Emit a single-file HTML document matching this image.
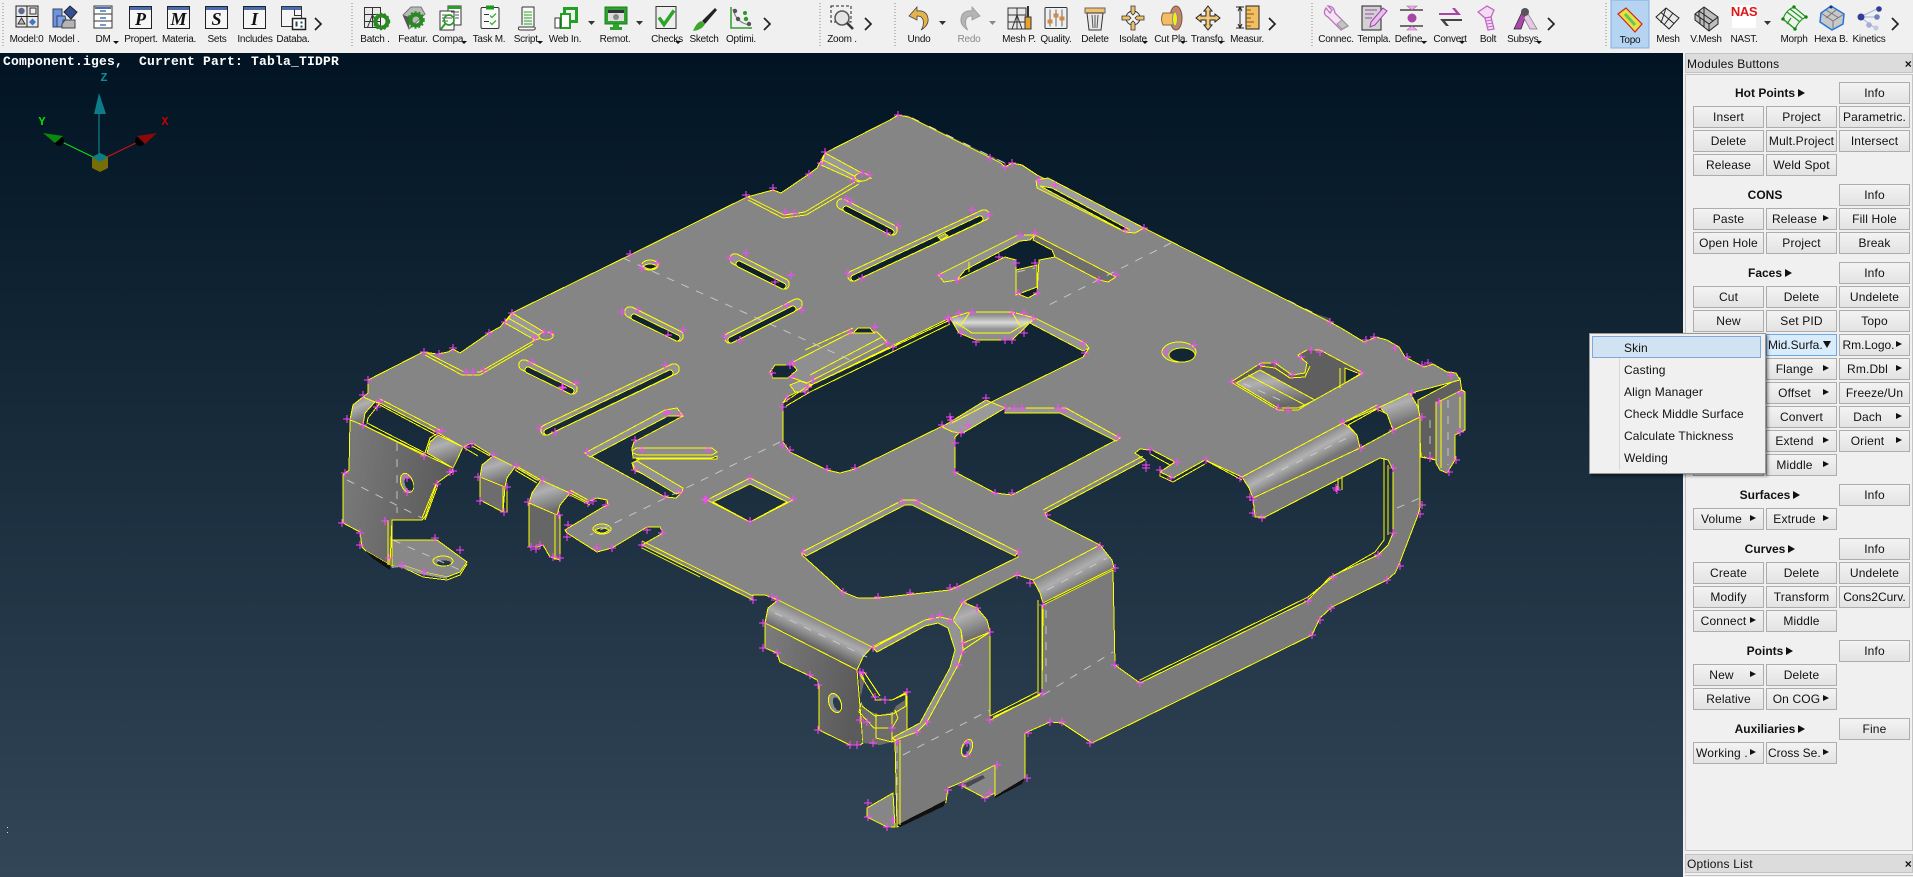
<!DOCTYPE html>
<html><head><meta charset="utf-8"><title>Component.iges</title>
<style>
html,body{margin:0;padding:0;background:#f0f0f0}
body{position:relative;width:1913px;height:877px;overflow:hidden;font-family:"Liberation Sans",sans-serif}
svg{position:absolute;left:0;top:0;display:block}
.y{stroke:#ff0;fill:none;stroke-width:1}
.tl text{font:10px "Liberation Sans",sans-serif;text-anchor:middle;fill:#111;letter-spacing:-.25px}
#vt{position:absolute;left:3px;top:52px;font:bold 13px/20px "Liberation Mono",monospace;letter-spacing:.2px;color:#fff;white-space:pre}
.b{position:absolute;width:71px;height:22px;box-sizing:border-box;border:1px solid #adadad;background:linear-gradient(#f3f3f3,#e3e3e3);font-size:12px;line-height:20px;text-align:center;color:#111;letter-spacing:.15px;white-space:nowrap;overflow:hidden}
.c1{left:1693px}.c2{left:1766px}.c3{left:1839px}
.a{padding-right:14px}
.a i{position:absolute;right:7px;top:6px;width:0;height:0;border-left:6px solid #111;border-top:3.5px solid transparent;border-bottom:3.5px solid transparent}
.l{position:absolute;left:1693px;width:144px;height:22px;line-height:22px;text-align:center;font-size:12px;font-weight:bold;color:#111}
.l span{position:relative}
.l i{position:absolute;right:-10px;top:3px;width:0;height:0;border-left:7px solid #111;border-top:4px solid transparent;border-bottom:4px solid transparent}
.tt{position:absolute;left:1685px;width:228px;box-sizing:border-box;background:#dcdcdc;border:1px solid #c4c4c4;font-size:12px;color:#111;letter-spacing:.2px;padding-left:1px;line-height:20px;height:20px}
.tt b{position:absolute;right:0;top:0;font-weight:bold;font-size:12px}
#pb{position:absolute;left:1685px;top:74px;width:228px;height:777px;box-sizing:border-box;border:1px solid #c4c4c4;background:#f0f0f0}
#mn{position:absolute;left:1589px;top:333px;width:177px;height:141px;box-sizing:border-box;background:#f0f0f0;border:1px solid #979797;box-shadow:2px 2px 3px rgba(0,0,0,.45)}
#mn .s{position:absolute;left:29px;top:3px;bottom:3px;width:1px;background:#d8d8d8}
#mn .h{position:absolute;left:2px;top:2px;width:169px;height:22px;box-sizing:border-box;background:#d1e3f3;border:1px solid #7da9dc}
#mn p{position:absolute;left:34px;margin:0;font-size:12px;line-height:16px;color:#111;white-space:nowrap;letter-spacing:.12px}
</style></head><body>

<svg width="1913" height="877" viewBox="0 0 1913 877">
<defs>
<linearGradient id="bg" gradientUnits="userSpaceOnUse" x1="0" y1="53" x2="0" y2="877"><stop offset="0" stop-color="#011423"/><stop offset="1" stop-color="#324658"/></linearGradient>
<linearGradient id="gFL" gradientUnits="userSpaceOnUse" x1="824" y1="622" x2="813" y2="646"><stop offset="0" stop-color="#858585"/><stop offset=".4" stop-color="#acacac"/><stop offset="1" stop-color="#666"/></linearGradient>
<linearGradient id="gR" gradientUnits="userSpaceOnUse" x1="1290" y1="451" x2="1302" y2="473"><stop offset="0" stop-color="#858585"/><stop offset=".45" stop-color="#b2b2b2"/><stop offset="1" stop-color="#757575"/></linearGradient>
<linearGradient id="gBR" gradientUnits="userSpaceOnUse" x1="1065" y1="563" x2="1078" y2="587"><stop offset="0" stop-color="#858585"/><stop offset=".45" stop-color="#aeaeae"/><stop offset="1" stop-color="#757575"/></linearGradient>
<linearGradient id="gS" x1="0" y1="0" x2=".35" y2="1"><stop offset="0" stop-color="#868686"/><stop offset=".4" stop-color="#b0b0b0"/><stop offset="1" stop-color="#686868"/></linearGradient>
<linearGradient id="gL" x1="0" y1="0" x2="1" y2=".2"><stop offset="0" stop-color="#7c7c7c"/><stop offset="1" stop-color="#5b5b5b"/></linearGradient>
<linearGradient id="gB" x1="0" y1="0" x2="0" y2="1"><stop offset=".1" stop-color="#8e8e8e"/><stop offset=".38" stop-color="#d8d8d8"/><stop offset=".6" stop-color="#959595"/><stop offset="1" stop-color="#8a8a8a"/></linearGradient>
<marker id="x" markerUnits="userSpaceOnUse" markerWidth="9" markerHeight="9" refX="4.5" refY="4.5" overflow="visible"><path d="M.5 4.5h8M4.5 .5v8" stroke="#ff45ff" stroke-width="1" fill="none" shape-rendering="crispEdges"/></marker>
</defs>
<rect x="0" y="53" width="1683" height="824" fill="url(#bg)"/>

<!-- edge fade and dashes behind the plate -->
<path d="M905 116L1000 162M1030 176L1145 230M1270 300L1330 320" stroke="#777" stroke-width="3" opacity=".55" fill="none"/>
<path d="M912 118L1320 316" stroke="#dcdcdc" stroke-dasharray="8 11" fill="none"/>

<g shape-rendering="crispEdges">
<!-- right back wall and flange -->
<path d="M1418 400L1460 378 1462 392 1436 403 1436 460 1421 457Z" fill="#5f5f5f" class="y" style="fill:#5f5f5f"/>
<path d="M1436 403L1462 390 1465 392 1465 430 1455 435 1455 460 1447 473 1440 470 1436 463Z" style="fill:#858585" class="y"/>
<path d="M1441 400V468M1460 392V430" class="y"/>
<path d="M1424 457l8 2" class="y"/>
<!-- front wall -->
<path d="M990 720L1042 693 1043 605 1113 570 1115 665 1140 683 1307 601 1330 577 1378 555 1388 545 1393 533 1393 470 1388 460 1380 458 1265 517 1255 517 1253 498 1420 417 1420 507 1418 515 1398 567 1395 573 1387 580 1332 607 1320 618 1312 635 1092 743 1062 723 1050 722 1025 733 1025 778 1020 783 995 796 995 765 962 782 948 788 946 802 897 827 895 740 917 732 927 722 958 665 963 650 963 643 990 632Z" fill="#7a7a7a" stroke="#ff0"/>
<path d="M995 796L1025 778 1022 784 995 798ZM897 825L946 800 944 806 900 827Z" fill="#111"/>
<path d="M1042 693V605M1038 695V600M990 632V720M1388 535V465M1384 458V540L1375 552 1335 575 1308 597 1140 680" class="y"/>
<path d="M1040 695L993 717M1037 692L990 716" class="y"/>
<path d="M900 740V825" class="y"/>
<!-- lower tabs -->
<path d="M867 808L893 793 895 827 887 827 867 817Z" fill="#868686" stroke="#ff0"/>
<path d="M962 782L995 765 995 793 985 798 962 786Z" fill="#868686" stroke="#ff0"/>
<path d="M963 784L983 775 985 778 968 787Z" fill="#223" opacity=".6"/>
<!-- left front wall -->
<path d="M765 623L765 648 777 653 780 662 808 675 817 680 819 685 819 730 850 745 860 745 863 743 857 670Z" fill="url(#gL)" stroke="#ff0"/>
<path d="M859 670L863 743 880 745 892 742 907 735 907 692 891 700 875 697 860 672Z" fill="#6c6c6c"/>
<path d="M860 672L876 700V738L892 742V700M892 700L907 692V735L892 742M859 712L874 728 892 728 898 718 895 710M859 712L862 700" class="y"/>
<path d="M860 675L876 698M864 672L880 696" stroke="#ff0" fill="none"/>
<path d="M865 678L880 700 890 700 905 694 905 700 896 706 893 712 880 715 866 710 860 700Z" fill="url(#bg)"/>
<path d="M861 676L876 700 892 700 906 694 906 706 893 714 875 716 862 706" class="y"/>
<!-- left wall, far left -->
<path d="M350 420L349 470 343 475 343 523 360 532 362 547 366 551 390 565 392 520 422 520 425 517 437 483 452 472 453 468 363 425Z" fill="url(#gL)" stroke="#ff0"/>
<path d="M366 551L390 565 390 570 372 558Z" fill="#111"/>
<path d="M425 520L438 485M422 518L436 484" class="y"/>
<!-- tab on the lower left -->
<path d="M392 540L437 540 467 562 460 572 447 577 423 572 402 565 392 567Z" fill="#888" stroke="#ff0"/>
<path d="M388 520V565M392 520V567M391 566L402 567 423 577 447 580 460 575 467 564" class="y"/>
<path d="M391 566L392 568 400 567 420 574 447 579 447 577 423 572 402 565Z" fill="#999"/>
<ellipse cx="443" cy="561" rx="10" ry="5" fill="#888" stroke="#ff0"/>
<ellipse cx="444" cy="563" rx="7" ry="2.5" fill="url(#bg)"/>
<!-- flanges -->
<path d="M480 477L480 500 503 512 505 487Z" fill="#6d6d6d" stroke="#ff0"/>
<path d="M503 487V512M507 487V512" class="y"/>
<path d="M529 503L529 547 538 547 543 545 550 557 560 560 560 515 557 515Z" fill="#666" stroke="#ff0"/>
<path d="M555 515V560" class="y"/>

<!-- plate -->
<path d="M368 380L423 352 437 354 448 352 453 349 460 353 489 333 500 327 512 313 630 255 747 197 773 190 781 193 809 174 817 168 825 153 890 120 898 115 909 117 991 158 1001 163 1005 167 1012 163 1022 165 1037 175 1144 228 1330 322 1341 328 1364 342 1376 337 1387 340 1399 347 1405 357 1424 367 1433 364 1447 372 1456 373 1460 380 1415 392 1380 407 1343 423 1242 477 1205 460 1173 478 1160 472 1175 462 1152 450 1140 449 1135 453 1145 460 1045 513 1047 518 1100 545 1033 580 1017 575 963 602 977 608 953 620 940 617 925 620 872 647 778 600 765 595 753 595 753 600 642 545 663 533 660 527 647 527 612 548 597 552 567 533 565 530 603 507 608 505 607 500 597 498 587 502 570 493 541 480 537 480 515 467 493 456 472 443 463 447 438 433 380 403 375 402 363 397 368 393Z" fill="#858585" stroke="#ff0"/>

<!-- bends -->
<path d="M778 600L872 647 863 657 857 670 765 623 768 608Z" fill="url(#gFL)" stroke="#ff0"/>
<path d="M1242 477L1343 423 1350 428 1357 435 1360 448 1253 498 1249 488Z" fill="url(#gR)" stroke="#ff0"/>
<path d="M1033 580L1100 545 1112 560 1114 568 1043 603 1040 593Z" fill="url(#gBR)" stroke="#ff0"/>
<path d="M963 602L977 608 987 620 990 632 963 643 961 630 953 620Z" fill="url(#gS)" stroke="#ff0"/>
<path d="M1380 407L1410 393 1418 407 1420 417 1393 430 1388 417Z" fill="url(#gS)" stroke="#ff0"/>
<path d="M1348 425L1377 409 1387 414 1393 430 1360 448 1357 435Z" fill="url(#bg)" stroke="#ff0"/>
<path d="M1343 423L1377 405M1393 430L1360 448" class="y"/>
<path d="M350 420L353 405 363 397 375 402 365 413 363 425Z" fill="url(#gS)" stroke="#ff0"/>
<path d="M368 418L380 403 438 433 430 438 425 453 367 423Z" fill="url(#bg)" stroke="#ff0"/>
<path d="M363 425L425 456M380 399L440 430M378 404L436 435" class="y"/>
<path d="M427 453L430 442 438 435 463 447 458 458 453 468Z" fill="url(#gS)" stroke="#ff0"/>
<path d="M480 477L482 465 493 456 515 467 507 478 505 487Z" fill="url(#gS)" stroke="#ff0"/>
<path d="M529 503L532 493 541 480 570 493 560 505 557 515Z" fill="url(#gS)" stroke="#ff0"/>
<path d="M463 447L478 456 M472 446L490 456M515 470L537 483M518 467L541 480M570 495L590 505M570 490L588 500" class="y"/>

<!-- tabs on the top edges -->
<path d="M512 313L544 332 553 335 535 340 505 323Z" fill="#9a9a9a" stroke="#ff0"/>
<path d="M508 318L540 336M535 340L480 372 464 372 425 352M533 344L480 375 462 375 425 355" class="y"/>
<path d="M825 153L871 178 859 182 821 165Z" fill="#9a9a9a" stroke="#ff0"/>
<path d="M823 160L862 180M855 182L805 212 784 215 748 197M859 184L806 215 783 218 748 200" class="y"/>
<ellipse cx="862" cy="177" rx="7" ry="4" fill="#858585" stroke="#ff0"/>
<ellipse cx="546" cy="336" rx="7" ry="4" fill="#858585" stroke="#ff0"/>

<!-- capsule slots: outer -->
<g fill="none" stroke-linecap="round">
<path d="M730 338L797 304M546 430L674 369M853 276L984 215M524 365L572 389M630 312L678 336M735 259L784 284M842 204L892 230" stroke="#ff0" stroke-width="11.5"/>
<path d="M730 338L797 304M546 430L674 369M853 276L984 215M524 365L572 389M630 312L678 336M735 259L784 284M842 204L892 230" stroke="#939393" stroke-width="9.5"/>
<g transform="translate(1 2)">
<path d="M730 338L792 307M546 430L669 371M853 276L979 217" stroke="#ff0" stroke-width="7"/>
<path d="M730 338L792 307M546 430L669 371M853 276L979 217" stroke="url(#bg)" stroke-width="5"/>
</g>
<g transform="translate(-1 2)">
<path d="M529 368L572 389M635 315L678 336M740 262L784 284M847 207L892 230" stroke="#ff0" stroke-width="7"/>
<path d="M529 368L572 389M635 315L678 336M740 262L784 284M847 207L892 230" stroke="url(#bg)" stroke-width="5"/>
</g>
</g>
<path d="M938 237L945 233.500 948 236 941 240Z" fill="#999" stroke="#ff0"/>
<ellipse cx="650" cy="265" rx="8" ry="5" fill="#949494" stroke="#ff0"/>
<path d="M643 266Q650 262 657 266Q651 272 643 266Z" fill="url(#bg)" stroke="#ff0"/>
<ellipse cx="602" cy="529" rx="9" ry="5" fill="#949494" stroke="#ff0"/>
<path d="M595 530Q602 526 609 530Q602 536 595 530Z" fill="url(#bg)" stroke="#ff0"/>

<!-- Y shaped hole -->
<path d="M585 453L665 410 677 408 683 416 634 442 632 448 633 458 712 458 717 456 717 459 640 459 632 463 634 470 682 492 676 498 665 497Z" fill="url(#bg)" stroke="#ff0"/>
<path d="M585 453L665 410 677 408 683 416 668 416 590 457Z" fill="#939393" stroke="#ff0"/>
<path d="M632 451L636 448 712 448 717 452 712 455 638 455 633 453Z" fill="#8d8d8d" stroke="#ff0"/>
<path d="M636 459H714" stroke="#ff0"/>
<path d="M632 463L637 461 683 488 682 492 676 494 636 470Z" fill="#939393" stroke="#ff0"/>

<!-- diamond -->
<path d="M707 500L750 478 793 500 750 522Z" fill="#939393" stroke="#ff0"/>
<path d="M713 502L750 484 787 502 750 522Z" fill="url(#bg)" stroke="#ff0"/>

<!-- hole 1 -->
<path d="M783 403L787 397 805 388 950 318 959 333 976 340 1012 340 1035 318 1085 343 1089 348 1083 357 855 469 840 473 827 470 790 452 783 442Z" fill="url(#bg)" stroke="#ff0"/>
<path d="M1035 318L1085 343 1089 348 1083 351 1030 323Z" fill="#949494" stroke="#ff0"/>
<path d="M950 318L970 312 1012 312 1035 318 1012 340 976 340 959 333Z" fill="url(#gB)" stroke="#ff0"/>
<path d="M955 322L972 333H1010L1028 322M970 312L961 325M1012 312L1020 326" class="y"/>
<path d="M793 362L850 333 877 332 887 342 807 383 790 377Z" fill="#8f8f8f" stroke="#ff0"/>
<path d="M805 350L853 328M810 375L882 337" class="y"/>
<path d="M853 333L858 328 870 328 874 333Z" fill="url(#bg)" stroke="#ff0"/>
<path d="M770 372L775 365 793 365 797 370 788 378 773 378Z" fill="url(#bg)" stroke="#ff0"/>
<path d="M790 385L800 381 812 385 804 392 795 392Z" fill="#9a9a9a" stroke="#ff0"/>
<path d="M783 403L805 388 950 320M786 406L810 392 950 324" class="y"/>

<!-- hole 2 -->
<path d="M955 437L955 472 995 493 1012 495 1120 438 1066 408 1005 408 960 432Z" fill="url(#bg)" stroke="#ff0"/>
<path d="M942 427L986 400 1005 408 963 433 953 432Z" fill="#9a9a9a" stroke="#ff0"/>
<path d="M950 424L992 402" class="y"/>
<path d="M1005 408L1066 408 1120 438 1116 441 1060 413 1005 413Z" fill="#949494" stroke="#ff0"/>

<!-- hole 3 -->
<path d="M802 552L903 500 915 500 1018 552 1018 557 957 587 950 590 878 598 858 598 843 592 802 555Z" fill="url(#bg)" stroke="#ff0"/>
<path d="M802 552L903 500 915 500 1018 552 1015 556 912 505 905 505 806 556Z" fill="#929292" stroke="#ff0"/>

<!-- triangle like hole above -->
<path d="M963 650L990 632M873 648L925 620 940 617 953 620 961 630 963 650 958 665 927 722 917 732 895 740 892 738 920 723 950 668 955 650 948 628 938 623 925 626 877 652Z" fill="#939393" stroke="#ff0"/>

<!-- complex cut top centre -->
<path d="M938 275L1018 235 1035 235 1116 277 1108 282 1099 280 1055 257 1039 260 1037 293 1028 298 1016 293 1016 260 1005 257 957 280 944 282Z" fill="url(#bg)" stroke="#ff0"/>
<path d="M938 275L1018 235 1035 235 1030 240 1020 241 965 270 957 280 944 282Z" fill="#929292" stroke="#ff0"/>
<path d="M1035 235L1116 277 1108 282 1099 280 1055 257 1052 250 1033 240Z" fill="#6e6e6e" stroke="#ff0"/>
<path d="M1016 270L1037 265 1037 287 1016 295Z" fill="#777" stroke="#ff0"/>
<path d="M969 272V262" class="y"/>

<!-- long slot by the right edge -->
<path d="M1036 180L1048 178 1144 228 1135 233 1125 232 1037 188Z" fill="#9d9d9d" stroke="#ff0"/>
<path d="M1040 186L1052 188 1130 230 1122 230Z" fill="url(#bg)" stroke="#ff0"/>

<!-- round hole -->
<ellipse cx="1179" cy="352" rx="17" ry="10" fill="#949494" stroke="#ff0"/>
<ellipse cx="1182" cy="355" rx="13" ry="7" fill="url(#bg)" stroke="#ff0"/>

<!-- right cut -->
<path d="M1231 382L1261 363 1275 363 1292 375 1305 373 1307 363 1298 355 1307 350 1320 350 1363 373 1311 402 1298 410 1278 410Z" fill="#5f5f5f" stroke="#ff0"/>
<path d="M1236 383L1260 370 1315 400 1298 408 1278 408Z" fill="url(#gS)" stroke="#ff0"/>
<path d="M1260 366L1275 368 1290 378 1305 377 1310 366 M1248 375L1305 405" class="y"/>
<path d="M1345 368L1360 374 1345 383Z" fill="url(#bg)" stroke="#ff0"/>
<path d="M1340 368V388" class="y"/>
<!-- strip at the notch -->
<path d="M1145 460L1045 513M1143 456L1043 510M1152 450L1175 462M1150 454L1170 465M1205 464L1173 482 1160 476V472M1205 460L1242 480" class="y"/>
<path d="M1140 453L1150 453 1152 458 1146 460Z" fill="url(#bg)"/>
<path d="M753 596L642 541M700 577L642 548" class="y"/>
<!-- wall holes -->
<ellipse cx="407" cy="483" rx="6" ry="10" transform="rotate(-20 407 483)" fill="#8f8f8f" stroke="#ff0"/>
<ellipse cx="409" cy="484" rx="4" ry="7" transform="rotate(-20 409 484)" fill="url(#bg)"/>
<ellipse cx="835" cy="703" rx="6" ry="10" transform="rotate(-20 835 703)" fill="#8f8f8f" stroke="#ff0"/>
<ellipse cx="837" cy="704" rx="3.5" ry="7" transform="rotate(-20 837 704)" fill="url(#bg)"/>
<ellipse cx="967" cy="748" rx="5" ry="9" transform="rotate(20 967 748)" fill="#8f8f8f" stroke="#ff0"/>
<ellipse cx="966" cy="749" rx="3" ry="6" transform="rotate(20 966 749)" fill="url(#bg)"/>
<!-- behind tab at right -->
<path d="M1338 478V490M1342 476V490" class="y"/>
</g>

<!-- plate dashes -->
<g stroke="#d0d0d0" fill="none" stroke-dasharray="8 8" opacity=".85">
<path d="M623 258L850 360M1171 243L1043 308M780 442L590 535M903 755L990 710M1043 695L1113 652M1397 508L1420 498M347 480L422 518M397 443V513M393 540L460 570"/>
<path d="M775 613L867 657M1047 590L1107 558M1267 477L1347 438M1280 400L1240 382M1046 610V690M897 745V820M1448 400V465M1430 420V460M1017 272L1035 268"/>
</g>

<!-- vertex crosses -->
<path fill="none" stroke="none" marker-start="url(#x)" marker-mid="url(#x)" marker-end="url(#x)" d="M368 380L363 395 380 401 377 407 347 419 363 425 442 431 437 432 424 456 466 447 472 444 453 471 450 472 437 484 493 455 516 466 543 480 478 477 507 487 504 512 480 501 528 502 570 493 559 515 531 547 536 549 540 545 553 557 560 558 588 503 593 501 606 505 568 525 567 537 597 548 612 548 642 545 647 530 662 533 407 478 407 492 345 473 342 523 360 533 360 545 385 521 389 558 402 565 424 572 435 538 460 550 540 428 555 432 563 388 576 383 587 452 667 412 635 440 642 450 708 450 635 470 680 492 665 496 706 499 750 478 705 500 793 499 750 521 803 552 902 502 917 502 665 365 667 413 680 415 725 336 740 340 787 305 802 310 622 312 638 310 668 335 683 330 772 373 790 365 793 363 792 377 805 392 808 387 813 380 787 398 783 407 783 445 790 450 827 469 855 468 850 332 875 327 887 343 893 347 948 318 942 425 950 417 512 313 505 322 489 333 453 348 424 352 439 354 466 372 473 372 484 370 535 338 544 332 551 333 532 362 576 383 562 387 630 254 657 263 642 268 746 195 773 188 785 212 794 213 809 174 825 152 821 163 853 180 862 173 869 175 730 258 746 253 791 275 775 282 846 199 851 202 887 233 898 226 848 273 862 278 898 115 990 158 1005 167 1012 163 1039 180 1055 185 1144 228 1125 230 972 210 989 215 940 275 957 280 999 257 1016 263 1035 263 1020 235 1035 233 1116 275 1099 280 1018 293 1037 293 949 320 959 313 972 312 1012 313 1024 313 1033 318 976 342 1005 340 1012 340 1024 333 961 333 1083 343 1085 353 1194 345 1166 352 1330 322 1366 340 1374 337 1395 348 1407 357 1422 365 1428 363 1451 375 1460 393 1439 402 1460 432 1456 460 1449 472 1430 458 1232 382 1261 365 1275 363 1292 375 1301 357 1311 350 1320 352 1361 373 1288 410 1278 408 1412 393 1378 408 1343 422 1393 430 1361 448 1240 478 1250 497 1206 460 1171 478 1160 470 1177 462 1150 450 1146 465 1146 468 1336 488 986 398 1005 408 1014 408 1022 408 1058 408 1064 410 1118 437 955 443 955 472 995 493 1012 493 951 420 942 425 961 433 968 425 1047 515 1100 546 1115 568 1043 605 1030 583 1017 575 963 602 977 608 990 632 963 643 962 652 958 665 927 722 917 732 940 615 932 618 950 620 873 648 860 672 863 673 763 623 763 648 777 653 810 675 818 685 818 730 850 745 857 745 753 600 772 597 777 600 875 697 885 700 907 692 860 720 867 722 873 743 892 728 897 742 1042 693 990 720 1115 665 1140 683 1050 722 1062 722 1090 743 1028 733 1027 778 997 765 962 785 985 798 990 793 948 790 893 820 887 827 868 803 868 817 967 743 967 755 1422 417 1422 505 1420 514 1400 566 1387 580 1331 608 1320 620 1312 635 1393 468 1393 533 1378 555 1333 577 1308 601 1140 683 1262 518 1253 513 1253 500 1337 490 843 592 878 597 910 593 950 588 957 587 1018 552"/>

<!-- axis triad -->
<g>
<path d="M99 156V112" stroke="#0e7f8a" stroke-width="1.2"/>
<path d="M99 93L94 114H106Z" fill="#0e7c88"/>
<path d="M93 157L58 140" stroke="#10e010" stroke-width="1"/>
<path d="M107 157L140 141" stroke="#e01010" stroke-width="1"/>
<circle cx="59" cy="141" r="5" fill="#000"/><circle cx="140" cy="141" r="5" fill="#000"/>
<path d="M43 133L63 136 55 143Z" fill="#0a8a0a"/>
<path d="M157 133L137 136 145 144Z" fill="#8a0a0a"/>
<path d="M92 157L100 153 108 157 108 168 100 172 92 168Z" fill="#776c05"/>
<path d="M92 157L100 153 108 157 100 162Z" fill="#0e7c88"/>
<text x="104" y="81" font-family="Liberation Mono" font-size="12" font-weight="bold" text-anchor="middle" fill="#0e8a98">Z</text>
<text x="42" y="125" font-family="Liberation Mono" font-size="12" font-weight="bold" text-anchor="middle" fill="#00e000">Y</text>
<text x="165" y="125" font-family="Liberation Mono" font-size="12" font-weight="bold" text-anchor="middle" fill="#c80000">X</text>
</g>
<path d="M7 827h1v1h-1zM7 832h1v1h-1z" fill="#ddd"/>

<!-- TOOLBAR -->
<rect x="0" y="0" width="1913" height="53" fill="#f0f0f0"/>
<path d="M3 3V46M352 3V46M820 3V46M895 3V46M1312 3V46M1606 3V46" stroke="#8a8a8a" stroke-dasharray="1 2" fill="none"/>
<rect x="1611" y="0" width="38" height="48" fill="#b5d4f1" stroke="#80b0e0"/>

<g class="tl">
<text x="26.5" y="42">Model:0</text><text x="64" y="42">Model .</text><text x="103" y="42">DM</text><text x="141" y="42">Propert.</text><text x="179" y="42">Materia.</text><text x="217" y="42">Sets</text><text x="255" y="42">Includes</text><text x="293" y="42">Databa.</text>
<text x="375" y="42">Batch .</text><text x="413" y="42">Featur.</text><text x="449" y="42">Compa.</text><text x="489" y="42">Task M.</text><text x="527" y="42">Script.</text><text x="565" y="42">Web In.</text><text x="615" y="42">Remot.</text>
<text x="667" y="42">Checks</text><text x="704" y="42">Sketch</text><text x="741" y="42">Optimi.</text><text x="842" y="42">Zoom .</text><text x="919" y="42">Undo</text><text x="969" y="42" style="fill:#8a8a8a">Redo</text>
<text x="1019" y="42">Mesh P.</text><text x="1056" y="42">Quality.</text><text x="1095" y="42">Delete</text><text x="1133" y="42">Isolate</text><text x="1171" y="42">Cut Pla.</text><text x="1208" y="42">Transfo.</text><text x="1247" y="42">Measur.</text>
<text x="1336" y="42">Connec.</text><text x="1374" y="42">Templa.</text><text x="1411" y="42">Define .</text><text x="1450" y="42">Convert</text><text x="1488" y="42">Bolt</text><text x="1524" y="42">Subsys.</text>
<text x="1630" y="43">Topo</text><text x="1668" y="42">Mesh</text><text x="1706" y="42">V.Mesh</text><text x="1744" y="42">NAST.</text><text x="1794" y="42">Morph</text><text x="1831" y="42">Hexa B.</text><text x="1869" y="42">Kinetics</text>
</g>
<!-- chevrons -->
<path d="M315 18l6 6-6 6M764 18l6 6-6 6M865 18l6 6-6 6M1269 18l6 6-6 6M1548 18l6 6-6 6M1892 18l6 6-6 6" fill="none" stroke="#222" stroke-width="1.7"/>
<!-- dropdown marks -->
<path d="M113 41h6l-3 3zM461 41h6l-3 3zM537 41h6l-3 3zM675 41h6l-3 3zM1142 41h6l-3 3zM1180 41h6l-3 3zM1218 41h6l-3 3zM1421 41h6l-3 3zM1459 41h6l-3 3zM1536 41h6l-3 3z" fill="#111"/>
<path d="M588 21h7l-3.500 4zM636 21h7l-3.500 4zM939 21h7l-3.500 4zM1764 21h7l-3.500 4z" fill="#333"/>
<path d="M989 21h7l-3.500 4z" fill="#888"/>

<!-- Model:0 -->
<g transform="translate(16 6)"><rect width="22" height="21" fill="#e9e9e9" stroke="#222"/><path d="M11 0V21M0 10.500H22" stroke="#222"/><circle cx="5.500" cy="5" r="3.200" fill="#5c6b8c"/><rect x="14" y="2" width="6" height="6" fill="#eee" stroke="#333"/><path d="M2 18l3.500-6 3.500 6z" fill="#bbb" stroke="#333"/><path d="M16.500 12.500l3.500 3.500-3.500 3.500-3.500-3.500z" fill="#3f78c8"/></g>
<!-- Model . -->
<g transform="translate(53 6)"><path d="M0 3H9V10H4V21H0Z" fill="#6f93e0" stroke="#345"/><path d="M4 10H12L13 14H10V21H4Z" fill="#7fa0ea" stroke="#345"/><path d="M11 6L17 0 24 6 18 13Z" fill="#34508e" stroke="#223"/><path d="M12 14H22V22H9V18Z" fill="#b4b4b4" stroke="#444"/></g>
<!-- DM -->
<g transform="translate(94 6)"><rect width="18" height="22" fill="#fff" stroke="#333"/><rect x="1" y="1" width="16" height="2" fill="#4a6cb0"/><path d="M0 8H18M0 15H18" stroke="#333"/><path d="M6 5h6M6 12h6M6 19h6" stroke="#3f78c8" stroke-width="1.500"/></g>
<!-- P M S I -->
<g font-family="Liberation Serif" font-weight="bold" font-style="italic" font-size="18" text-anchor="middle" fill="#111">
<rect x="129.500" y="6.500" width="22" height="22" fill="#f6f6f6" stroke="#222"/><rect x="130" y="7" width="21" height="3" fill="#4a6cb0"/><text x="140.500" y="25">P</text>
<rect x="167.500" y="6.500" width="22" height="22" fill="#f6f6f6" stroke="#222"/><rect x="168" y="7" width="21" height="3" fill="#4a6cb0"/><text x="178.500" y="25">M</text>
<rect x="205.500" y="6.500" width="22" height="22" fill="#f6f6f6" stroke="#222"/><rect x="206" y="7" width="21" height="3" fill="#4a6cb0"/><text x="216.500" y="25">S</text>
<rect x="243.500" y="6.500" width="22" height="22" fill="#f6f6f6" stroke="#222"/><rect x="244" y="7" width="21" height="3" fill="#4a6cb0"/><text x="254.500" y="25">I</text>
</g>
<!-- Databa -->
<g transform="translate(281.500 6.500)"><rect width="20" height="20" fill="#f6f6f6" stroke="#333"/><rect x=".5" y=".5" width="19" height="3" fill="#4a6cb0"/><path d="M13 3V9H20" stroke="#333" fill="none"/><rect x="11" y="12" width="13" height="11" fill="#fff" stroke="#222" stroke-width="1.500"/><path d="M14 15h2v5h-2zM19 15h2v2h-2zM19 19h2v2h-2z" fill="#245"/></g>
<!-- Batch -->
<g transform="translate(364.500 7.500)"><rect width="16" height="20" fill="#e8e8e8" stroke="#333"/><path d="M0 7H16M0 14H16M8 0V20M3 20l5-13 5 13" stroke="#333" fill="none"/><circle cx="17" cy="14" r="6" fill="none" stroke="#2a8a22" stroke-width="4"/><circle cx="17" cy="14" r="8" fill="none" stroke="#2a8a22" stroke-width="1.500" stroke-dasharray="2 2"/></g>
<!-- Featur -->
<g transform="translate(403 7)"><path d="M0 8L8 0 18 0 22 7 6 22Z" fill="#b9b9b9" stroke="#777"/><path d="M0 8L6 22V10Z" fill="#555"/><circle cx="13" cy="13" r="5.500" fill="none" stroke="#2a8a22" stroke-width="4"/><circle cx="13" cy="13" r="8" fill="none" stroke="#2a8a22" stroke-width="1.500" stroke-dasharray="2 2"/></g>
<!-- Compa -->
<g transform="translate(440 6)"><rect x="8" y="0" width="13" height="19" fill="#fff" stroke="#333"/><rect x="8" y="0" width="13" height="3" fill="#28a028"/><rect x="0" y="5" width="14" height="19" fill="#fff" stroke="#333"/><path d="M2 9h10M2 12h10M2 15h6M11 6h8M15 9h4M15 12h4" stroke="#555"/><circle cx="9" cy="14" r="5" fill="none" stroke="#28a028" stroke-width="1.700"/><path d="M5 18l-4 5" stroke="#28a028" stroke-width="2"/></g>
<!-- Task M -->
<g transform="translate(481 6.500)"><rect y="1" width="18" height="21" rx="1.500" fill="#fbfbfb" stroke="#333"/><rect x="5" y="-1" width="8" height="4" fill="#1d9a1d"/><path d="M3 8h5M3 15h5" stroke="#333"/><path d="M9 9l2 2 4-4M9 16l2 2 4-4" fill="none" stroke="#39b239" stroke-width="1.300"/></g>
<!-- Script -->
<g transform="translate(518 6)"><path d="M4 1H16V21H1Q-1 24 3 24H15Q18 24 17 21M4 1V19" fill="#fbfbfb" stroke="#333"/><path d="M6 6h8M6 9h8M6 12h8M6 15h8M6 18h8" stroke="#27a327"/></g>
<!-- Web In -->
<g transform="translate(555 7)"><path d="M8 0H23V16H16V13H20V3H11V6H8Z" fill="#23a023"/><rect x="6" y="7" width="9" height="14" fill="#fff" stroke="#23a023" stroke-width="2"/><rect x="0" y="11" width="5" height="10" fill="#fff" stroke="#333"/></g>
<!-- Remot -->
<g transform="translate(605 7)"><rect x="0" y="0" width="22" height="17" fill="#2fa12f" stroke="#1c7f1c"/><rect x="3" y="3" width="16" height="11" fill="#ddd"/><rect x="3" y="3" width="16" height="3" fill="#333"/><circle cx="11" cy="10" r="3" fill="#888"/><path d="M8 17H14V20H17V23H5V20H8Z" fill="#2fa12f"/></g>
<!-- Checks -->
<g transform="translate(656 6.500)"><rect width="20" height="22" fill="#eee" stroke="#333"/><path d="M3 11l5 7 10-14" fill="none" stroke="#2aa52a" stroke-width="3.500"/></g>
<!-- Sketch -->
<g transform="translate(693 8)"><path d="M22 0L9 13 12 16 24 2Z" fill="#222"/><path d="M8 13Q3 15 0 23Q9 22 12 16Z" fill="#3fa52f"/></g>
<!-- Optimi -->
<g transform="translate(730 7)"><path d="M1 0V21H22" fill="none" stroke="#2ea02e" stroke-width="1.500"/><path d="M3 2Q6 16 20 18" fill="none" stroke="#777"/><circle cx="5" cy="4" r="2.200" fill="#555"/><circle cx="8" cy="12" r="2.200" fill="#555"/><circle cx="16" cy="12" r="2.200" fill="#2a9a2a"/><circle cx="15" cy="6" r="2" fill="#2a9a2a"/><circle cx="19" cy="17" r="2.200" fill="#555"/></g>
<!-- Zoom -->
<g transform="translate(831 6)"><rect x="0" y="0" width="20" height="16" fill="none" stroke="#222" stroke-dasharray="3 2"/><circle cx="11" cy="12" r="7" fill="#e4e4e4" stroke="#555" stroke-width="1.500"/><path d="M16 17l6 6" stroke="#333" stroke-width="2.500"/></g>
<!-- Undo -->
<g transform="translate(909 7)"><path d="M8 0L0 9 8 13V9Q16 9 14 19Q13 22 12 23Q22 17 18 8Q15 3 8 4Z" fill="#e4b44a" stroke="#444" stroke-width=".8"/></g>
<!-- Redo -->
<g transform="translate(957 7)"><path d="M15 0L23 9 15 13V9Q7 9 9 19Q10 22 11 23Q1 17 5 8Q8 3 15 4Z" fill="#b4b4b4" stroke="#999" stroke-width=".8"/></g>
<!-- Mesh P -->
<g transform="translate(1008 6)"><rect y="2" width="18" height="21" fill="#e8e8e8" stroke="#333"/><path d="M0 9H18M0 16H18M9 2V23M4 23L9 9 14 23" fill="none" stroke="#333"/><rect x="19" y="0" width="2" height="11" fill="#333"/><rect x="17" y="11" width="6" height="12" fill="#e8a030" stroke="#333"/></g>
<!-- Quality -->
<g transform="translate(1045 7.500)"><rect width="22" height="21" rx="1" fill="#f0f0f0" stroke="#333"/><path d="M5 2V19M11 2V19M17 2V19" stroke="#666"/><rect x="2.500" y="12" width="5" height="4" fill="#d08a48"/><rect x="8.500" y="6" width="5" height="4" fill="#d08a48"/><rect x="14.500" y="9" width="5" height="4" fill="#d08a48"/></g>
<!-- Delete -->
<g transform="translate(1085 7)"><rect x="0" y="1" width="20" height="5" fill="#f0c070" stroke="#666"/><path d="M2 6H18L16 23H4Z" fill="#e8e8e8" stroke="#333"/><path d="M7 8L8 21M10 8V21M13 8L12 21" stroke="#555"/></g>
<!-- Isolate -->
<g transform="translate(1122 6)"><circle cx="11" cy="12" r="7" fill="#f2f2f2" stroke="#333"/><path d="M9 0H13V7L11 9 9 7ZM9 24H13V17L11 15 9 17ZM0 10V14H7L9 12 7 10ZM22 10V14H15L13 12 15 10Z" fill="#eec070" stroke="#333" stroke-width=".8"/></g>
<!-- Cut Pla -->
<g transform="translate(1160 6)"><ellipse cx="16" cy="12" rx="6" ry="12" fill="#c2866a" stroke="#7a5540"/><path d="M3 7H15V19H3Q0 13 3 7Z" fill="#f2bd66" stroke="#8a6a30"/><ellipse cx="15" cy="13" rx="2.500" ry="7" fill="#f4f000" stroke="#88a"/></g>
<!-- Transfo -->
<g transform="translate(1197 6)"><path d="M11 0L15 5H13V10H18V8L23 12 18 16V14H13V19H15L11 24 7 19H9V14H4V16L-1 12 4 8V10H9V5H7Z" fill="#f4c878" stroke="#222"/></g>
<!-- Measur -->
<g transform="translate(1236 6)"><path d="M0 1H8M4 1V22M0 22H8M2 5l2-4 2 4M2 18l2 4 2-4" fill="none" stroke="#222"/><rect x="10" y="0" width="13" height="23" fill="#f3bf62" stroke="#222"/><path d="M10 4h5M10 8h8M10 12h5M10 16h8M10 20h5" stroke="#7a5b20"/></g>
<!-- Connec -->
<g transform="translate(1324 6)"><path d="M2 2Q-2 8 4 11L17 24 24 20 11 7Q10 0 4 0L8 4 6 7Z" fill="#f2e4f2" stroke="#c070c0" stroke-width="1.300"/><path d="M13 18L18 23 24 20 18 14Z" fill="#c4c4c4" stroke="#999"/></g>
<!-- Templa -->
<g transform="translate(1362 6)"><rect width="19" height="24" fill="#d2d2d2" stroke="#222"/><path d="M3 4h12M3 8h9M3 12h7" stroke="#9a4aa0"/><path d="M9 16L21 2 25 5 13 19 8 21Z" fill="#e8c0ea" stroke="#a040a8"/></g>
<!-- Define -->
<g transform="translate(1400 6)"><path d="M0 4H23M0 20H23" stroke="#222" stroke-width="1.300"/><path d="M7 0H17L12 4Z" fill="#eab0e6" stroke="#b060b0" stroke-width=".6"/><path d="M7 24H17L12 20Z" fill="#eab0e6" stroke="#b060b0" stroke-width=".6"/><circle cx="12" cy="12" r="4.500" fill="#a846a8"/></g>
<!-- Convert -->
<g transform="translate(1439 7)"><path d="M0 6H17L13 1H16L22 8H0Z" fill="#a846a8"/><path d="M23 14H6L10 19H7L1 12H23Z" fill="#444"/></g>
<!-- Bolt -->
<g transform="translate(1477 6)"><path d="M1 6L10 0 17 4 14 11 8 12Z" fill="#f3dcf3" stroke="#c468c4" stroke-width="1.300"/><path d="M8 12L14 11 17 23 11 24Z" fill="#f3dcf3" stroke="#c468c4" stroke-width="1.300"/><path d="M9 15l6-1M10 18l6-1M11 21l5-1" stroke="#c468c4"/></g>
<!-- Subsys -->
<g transform="translate(1513 7)"><path d="M9 5L1 22H8L12 11Z" fill="#ab48ab" stroke="#222" stroke-width=".7"/><path d="M14 5L24 22H17L11 11Z" fill="#e8c6e8" stroke="#777" stroke-width=".7"/><circle cx="12" cy="5" r="4" fill="#555"/></g>
<!-- Topo -->
<g transform="translate(1618 8)"><path d="M0 6L8 0 24 16 17 24Q8 14 0 6Z" fill="#e8e040" stroke="#d02020" stroke-width="1.200"/><path d="M7 6L17 17" stroke="#5ec85e" stroke-width="3"/></g>
<!-- Mesh -->
<g transform="translate(1656 8)" fill="none" stroke="#222"><path d="M0 9L10 0 23 10 13 21Z" fill="#ebebeb"/><path d="M5 4.500L18 15.500M10 0L5 15M17 5L8 17"/></g>
<!-- V.Mesh -->
<g transform="translate(1694 7)" fill="none" stroke="#222"><path d="M1 7L10 0 24 10 24 17 15 24 1 13Z" fill="#bdbdbd"/><path d="M1 7L15 17 24 10M15 17V24M5 4L19 14M10 1V20M6 10V17M5 4V10"/></g>
<!-- NAST -->
<rect x="1732" y="5" width="24" height="23" fill="#fff"/><text x="1744" y="16" font-family="Liberation Sans" font-size="13" font-weight="bold" letter-spacing="-.4" text-anchor="middle" fill="#e01818">NAS</text>
<!-- Morph -->
<g transform="translate(1782 6)" fill="none" stroke="#1e9a1e" stroke-width="1.200"><path d="M1 13Q4 4 12 1L24 11Q17 14 13 23Z"/><path d="M5 6L18 16M8 3L21 13M1 13L13 23M9 12L5 18"/><circle cx="12" cy="1" r="1.200" fill="#222"/><circle cx="24" cy="11" r="1.200" fill="#222"/><circle cx="1" cy="13" r="1.200" fill="#222"/><circle cx="13" cy="23" r="1.200" fill="#222"/></g>
<!-- Hexa -->
<g transform="translate(1820 6)"><path d="M11 0L24 8 23 18 12 24 0 16 1 7Z" fill="#c8c8c8" stroke="#1e78e0" stroke-width="1.500"/><path d="M1 7L13 15 24 8M13 15V24M6 4L19 12M16 4L6 12" stroke="#777" fill="none"/><circle cx="11" cy="1" r="1.500" fill="#1b2f6a"/></g>
<!-- Kinetics -->
<g transform="translate(1857 6)"><path d="M3 11L22 2M3 11H20M3 11L18 22" stroke="#a8b0d8"/><circle cx="4" cy="11" r="3.500" fill="#2d3f96"/><circle cx="22" cy="3" r="2.800" fill="#2d3f96"/><circle cx="20" cy="11" r="2.800" fill="#7080c0"/><circle cx="12" cy="19" r="2.800" fill="#a4aed8"/><circle cx="19" cy="22" r="2.500" fill="#c0c8e4"/></g>
</svg>

<div id="vt">Component.iges,  Current Part: Tabla_TIDPR</div>

<!-- right panel -->
<div style="position:absolute;left:1683px;top:53px;width:230px;height:824px;background:#f0f0f0"></div>
<div class="tt" style="top:53px">Modules Buttons<b>×</b></div>
<div id="pb"></div>
<div class="tt" style="top:854px;height:19px;line-height:19px">Options List<b>×</b></div>
<div style="position:absolute;left:1685px;top:875px;width:228px;height:1px;background:#c4c4c4"></div>

<div class="l" style="top:82px"><span>Hot Points<i></i></span></div><div class="b c3" style="top:82px">Info</div>
<div class="b c1" style="top:106px">Insert</div><div class="b c2" style="top:106px">Project</div><div class="b c3" style="top:106px">Parametric.</div>
<div class="b c1" style="top:130px">Delete</div><div class="b c2" style="top:130px">Mult.Project</div><div class="b c3" style="top:130px">Intersect</div>
<div class="b c1" style="top:154px">Release</div><div class="b c2" style="top:154px">Weld Spot</div>

<div class="l" style="top:184px"><span>CONS</span></div><div class="b c3" style="top:184px">Info</div>
<div class="b c1" style="top:208px">Paste</div><div class="b c2 a" style="top:208px">Release<i></i></div><div class="b c3" style="top:208px">Fill Hole</div>
<div class="b c1" style="top:232px">Open Hole</div><div class="b c2" style="top:232px">Project</div><div class="b c3" style="top:232px">Break</div>

<div class="l" style="top:262px"><span>Faces<i></i></span></div><div class="b c3" style="top:262px">Info</div>
<div class="b c1" style="top:286px">Cut</div><div class="b c2" style="top:286px">Delete</div><div class="b c3" style="top:286px">Undelete</div>
<div class="b c1" style="top:310px">New</div><div class="b c2" style="top:310px">Set PID</div><div class="b c3" style="top:310px">Topo</div>
<div class="b c2" style="top:334px;background:#d9ecfb;border-color:#6fa8e0;text-align:left;padding-left:1px;letter-spacing:0">Mid.Surfa.<span style="position:absolute;right:5px;top:6px;width:0;height:0;border-top:7px solid #111;border-left:4px solid transparent;border-right:4px solid transparent"></span></div><div class="b c3 a" style="top:334px;padding-right:12px;letter-spacing:0">Rm.Logo.<i></i></div>
<div class="b c2 a" style="top:358px">Flange<i></i></div><div class="b c3 a" style="top:358px">Rm.Dbl<i></i></div>
<div class="b c2 a" style="top:382px">Offset<i></i></div><div class="b c3" style="top:382px">Freeze/Un</div>
<div class="b c2" style="top:406px">Convert</div><div class="b c3 a" style="top:406px">Dach<i></i></div>
<div class="b c2 a" style="top:430px">Extend<i></i></div><div class="b c3 a" style="top:430px">Orient<i></i></div>
<div class="b c1" style="top:454px"></div><div class="b c2 a" style="top:454px">Middle<i></i></div>

<div class="l" style="top:484px"><span>Surfaces<i></i></span></div><div class="b c3" style="top:484px">Info</div>
<div class="b c1 a" style="top:508px">Volume<i></i></div><div class="b c2 a" style="top:508px">Extrude<i></i></div>

<div class="l" style="top:538px"><span>Curves<i></i></span></div><div class="b c3" style="top:538px">Info</div>
<div class="b c1" style="top:562px">Create</div><div class="b c2" style="top:562px">Delete</div><div class="b c3" style="top:562px">Undelete</div>
<div class="b c1" style="top:586px">Modify</div><div class="b c2" style="top:586px">Transform</div><div class="b c3" style="top:586px;letter-spacing:0">Cons2Curv.</div>
<div class="b c1 a" style="top:610px;padding-right:10px">Connect<i></i></div><div class="b c2" style="top:610px">Middle</div>

<div class="l" style="top:640px"><span>Points<i></i></span></div><div class="b c3" style="top:640px">Info</div>
<div class="b c1 a" style="top:664px">New<i></i></div><div class="b c2" style="top:664px">Delete</div>
<div class="b c1" style="top:688px">Relative</div><div class="b c2 a" style="top:688px;padding-right:10px">On COG<i></i></div>

<div class="l" style="top:718px"><span>Auxiliaries<i></i></span></div><div class="b c3" style="top:718px">Fine</div>
<div class="b c1 a" style="top:742px;padding-right:12px;text-align:left;padding-left:2px">Working .<i></i></div><div class="b c2 a" style="top:742px;padding-right:12px;text-align:left;padding-left:1px;letter-spacing:0">Cross Se.<i></i></div>

<!-- popup menu -->
<div id="mn"><div class="s"></div><div class="h"></div>
<p style="top:6px">Skin</p><p style="top:28px">Casting</p><p style="top:50px">Align Manager</p><p style="top:72px">Check Middle Surface</p><p style="top:94px">Calculate Thickness</p><p style="top:116px">Welding</p></div>
</body></html>
